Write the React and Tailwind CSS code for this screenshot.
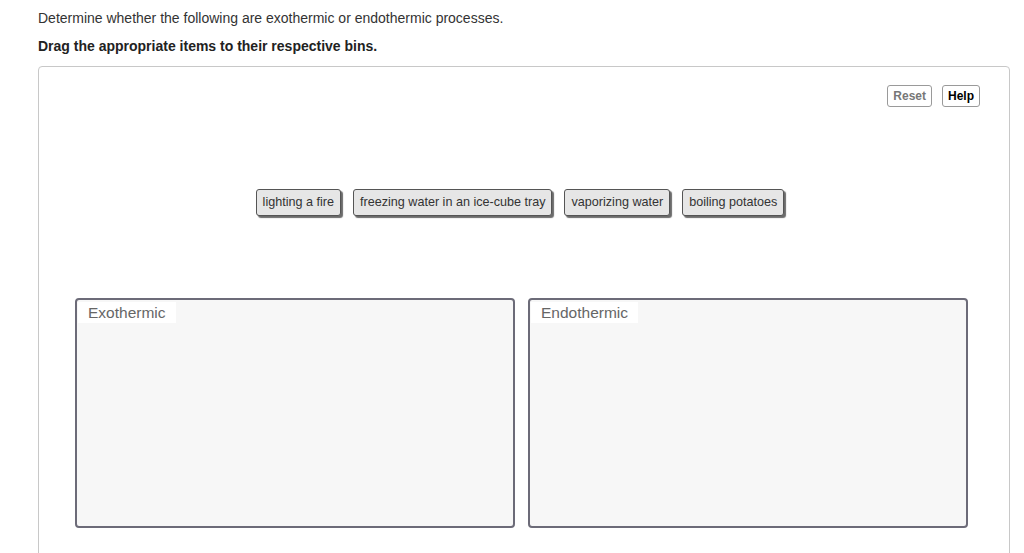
export default function App() {
  const items = ["lighting a fire", "freezing water in an ice-cube tray", "vaporizing water", "boiling potatoes"];
  return (
    <div className="h-[553px] overflow-hidden bg-white pl-[38px] pr-[14px]" style={{ fontFamily: '"Liberation Sans", Arial, sans-serif' }}>
      <p className="pt-[10px] text-[14px] leading-[16px] text-[#333]">Determine whether the following are exothermic or endothermic processes.</p>
      <p className="mt-[12px] text-[14px] font-bold leading-[16px] text-[#222]">Drag the appropriate items to their respective bins.</p>
      <div className="mt-[12px] h-[520px] rounded-[4px] border border-[#c8c8c8] bg-white">
        <div className="flex justify-end gap-[10px] pr-[29px] pt-[18px]">
          <button className="h-[22px] rounded-[3px] border border-[#9a9a9a] px-[5px] text-[12px] font-bold leading-[18px] text-[#777]">Reset</button>
          <button className="h-[22px] rounded-[3px] border border-[#9a9a9a] px-[5px] text-[12px] font-bold leading-[18px] text-black">Help</button>
        </div>
        <div className="mt-[82px] flex justify-center gap-[12px] pr-[8px]">
          {items.map((t) => (
            <div key={t} className="h-[27px] rounded-[3px] border border-[#555] bg-[#e6e6e6] px-[6px] text-[12.6px] leading-[25px] text-[#333] shadow-[2px_2px_1px_#6b6b6b]">
              {t}
            </div>
          ))}
        </div>
        <div className="mt-[82px] flex gap-[13px] pl-[36px]">
          {["Exothermic", "Endothermic"].map((b) => (
            <div key={b} className="h-[230px] w-[440px] rounded-[4px] border-2 border-[#6c6b78] bg-[#f7f7f7] p-[1px]">
              <div className="inline-block bg-white px-[10px] text-[15.5px] leading-[21px] text-[#666]">{b}</div>
            </div>
          ))}
        </div>
      </div>
    </div>
  );
}
